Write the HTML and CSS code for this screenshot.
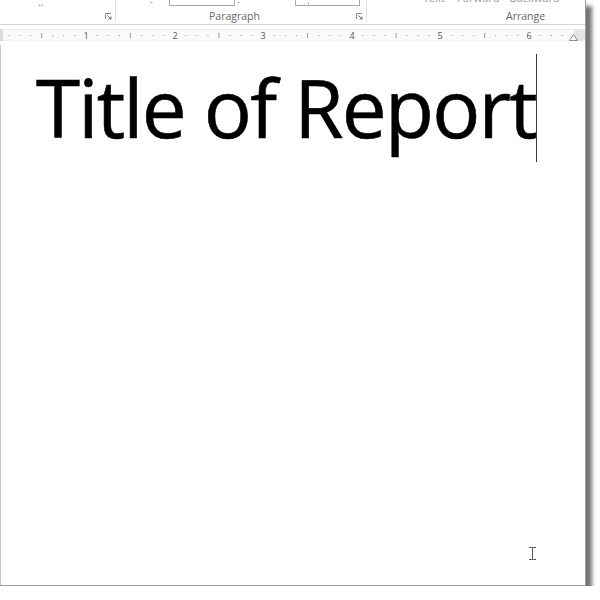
FILE: index.html
```html
<!DOCTYPE html>
<html>
<head>
<meta charset="utf-8">
<link rel="stylesheet" href="styles.css">
</head>
<body>
<div class="window">
  <div class="ribbon">
    <div class="group g1">
      <div class="controls"><span class="mark m1">‥</span></div>
      <div class="labelrow">
        <span class="launcher"><svg width="7" height="7" viewBox="0 0 7 7"><path d="M0.5 6V0.5H6" fill="none" stroke="#8a8a8a" stroke-width="1"/><path d="M2.5 2.5L6 6M6 3.5V6H3.5" fill="none" stroke="#6a6a6a" stroke-width="1"/></svg></span>
      </div>
    </div>
    <div class="group g2">
      <div class="controls">
        <span class="mark m2">-</span>
        <span class="tbox tb1"></span>
        <span class="mark m3">·</span>
        <span class="tbox tb2"><span class="dot"></span></span>
      </div>
      <div class="labelrow">
        <span class="glabel l2">Paragraph</span>
        <span class="launcher"><svg width="7" height="7" viewBox="0 0 7 7"><path d="M0.5 6V0.5H6" fill="none" stroke="#8a8a8a" stroke-width="1"/><path d="M2.5 2.5L6 6M6 3.5V6H3.5" fill="none" stroke="#6a6a6a" stroke-width="1"/></svg></span>
      </div>
    </div>
    <div class="group g3">
      <div class="controls top-text">
        <span class="tt t1">Text</span>
        <span class="tt t2">Forward</span>
        <span class="tt t3">Backward</span>
      </div>
      <div class="labelrow">
        <span class="glabel l3">Arrange</span>
      </div>
    </div>
  </div>
  <div class="ruler">
    <svg width="586" height="20" viewBox="0 0 586 20">
      <defs>
        <pattern id="ticks" patternUnits="userSpaceOnUse" x="-2.6" y="0" width="88.6" height="20">
          <rect x="10.6" y="10" width="1" height="1" fill="#8c8c8c"/>
          <rect x="21.7" y="10" width="1" height="1" fill="#8c8c8c"/>
          <rect x="32.7" y="10" width="1" height="1" fill="#8c8c8c"/>
          <rect x="43.8" y="8" width="1" height="5" fill="#9a9a9a"/>
          <rect x="54.9" y="10" width="1" height="1" fill="#8c8c8c"/>
          <rect x="65.9" y="10" width="1" height="1" fill="#8c8c8c"/>
          <rect x="77" y="10" width="1" height="1" fill="#8c8c8c"/>
        </pattern>
      </defs>
      <rect x="0" y="4" width="586" height="12" fill="#fbfbfb"/>
      <rect x="0" y="4" width="586" height="1" fill="#ececec"/>
      <rect x="0" y="15" width="586" height="1" fill="#f0f0f0"/>
      <rect x="0" y="4" width="3" height="12" fill="#dcdcdc"/>
      <rect x="574" y="4" width="12" height="12" fill="#e4e4e4"/>
      <rect x="0" y="4" width="572" height="12" fill="url(#ticks)"/>
      <g class="rnum">
        <text x="86" y="13.5">1</text>
        <text x="175" y="13.5">2</text>
        <text x="263" y="13.5">3</text>
        <text x="352" y="13.5">4</text>
        <text x="440" y="13.5">5</text>
        <text x="529" y="13.5">6</text>
      </g>
      <path d="M569.5 15.5L573.5 9.5L577.5 15.5Z" fill="#fff" stroke="#8a8a8a" stroke-width="1"/>
    </svg>
  </div>
  <div class="doc">
    <div class="title">Title of Report</div>
    <span class="caret"></span>
    <svg class="ibeam" width="9" height="15" viewBox="0 0 9 15"><path d="M1 1.5H3.5M5.5 1.5H8M4.5 2V13M1 13.5H3.5M5.5 13.5H8" fill="none" stroke="#555" stroke-width="1"/><path d="M3.5 1.5H5.5M3.5 13.5H5.5" stroke="#555" stroke-width="1"/></svg>
  </div>
</div>
</body>
</html>
```

FILE: styles.css
```css
html, body {
  margin: 0;
  padding: 0;
  background: #ffffff;
}

.window {
  box-sizing: border-box;
  width: 586px;
  height: 586px;
  border-right: 1px solid #9c9c9c;
  border-bottom: 1px solid #9c9c9c;
  box-shadow: 6px 6px 4px rgba(0, 0, 0, 0.55);
  background: #ffffff;
  display: flex;
  flex-direction: column;
  overflow: hidden;
  position: relative;
}

.ribbon {
  display: flex;
  height: 24px;
  border-bottom: 1px solid #d8d8d8;
  background: #ffffff;
  flex: none;
  font-family: "Open Sans", "Noto Sans", sans-serif;
}

.group {
  display: flex;
  flex-direction: column;
  height: 22px;
  border-right: 1px solid #e2e2e2;
  position: relative;
}

.g1 { width: 115px; }
.g2 { width: 250px; }
.g3 { flex: 1; border-right: none; }

.controls {
  height: 6px;
  position: relative;
  display: flex;
  align-items: flex-end;
  overflow: visible;
}

.labelrow {
  flex: 1;
  display: flex;
  align-items: center;
  padding-top: 4px;
}

.glabel {
  font-size: 10.5px;
  color: #666666;
  line-height: 12px;
}

.l2 { margin-left: 93px; }
.l3 { margin-left: 139px; }

.launcher {
  margin-left: auto;
  margin-right: 3px;
  width: 7px;
  height: 7px;
  display: flex;
  margin-top: 1px;
}

.mark {
  font-size: 10px;
  color: #777;
  line-height: 8px;
  margin-top: -5px;
}

.m1 { margin-left: 38px; }
.m2 { margin-left: 34px; font-size: 9px; }
.m3 { margin-left: 2px; }

.tbox {
  height: 10px;
  margin-top: -6px;
  border: 1px solid #a8a8a8;
  border-top: none;
  background: #fff;
  box-sizing: border-box;
  position: relative;
}

.tb1 { width: 66px; margin-left: 16px; }
.tb2 { width: 65px; margin-left: 55px; }

.dot {
  position: absolute;
  left: 12px;
  bottom: 1px;
  width: 1px;
  height: 1px;
  background: #666;
}

.top-text {
  align-items: flex-start;
}

.tt {
  font-size: 11px;
  line-height: 13px;
  color: #9a9a9a;
  margin-top: -9px;
}

.t1 { margin-left: 56px; }
.t2 { margin-left: 12px; }
.t3 { margin-left: 10px; }

.ruler {
  height: 20px;
  flex: none;
  background: #ffffff;
}

.ruler svg {
  display: block;
}

.rnum text {
  font-family: "Open Sans", "Noto Sans", sans-serif;
  font-size: 9px;
  fill: #555;
  text-anchor: middle;
}

.doc {
  flex: 1;
  position: relative;
  border-left: 1px solid #c8c8c8;
  background: #ffffff;
}

.title {
  font-family: "Open Sans", "Noto Sans", sans-serif;
  font-size: 80px;
  line-height: 80px;
  letter-spacing: -1.8px;
  color: #000;
  margin-top: 22px;
  padding-left: 35px;
  white-space: nowrap;
  -webkit-text-stroke: 0.6px #000;
}

.caret {
  position: absolute;
  left: 535px;
  top: 9px;
  width: 1px;
  height: 108px;
  background: #3a3a3a;
}

.ibeam {
  position: absolute;
  left: 527px;
  top: 501px;
}
```
